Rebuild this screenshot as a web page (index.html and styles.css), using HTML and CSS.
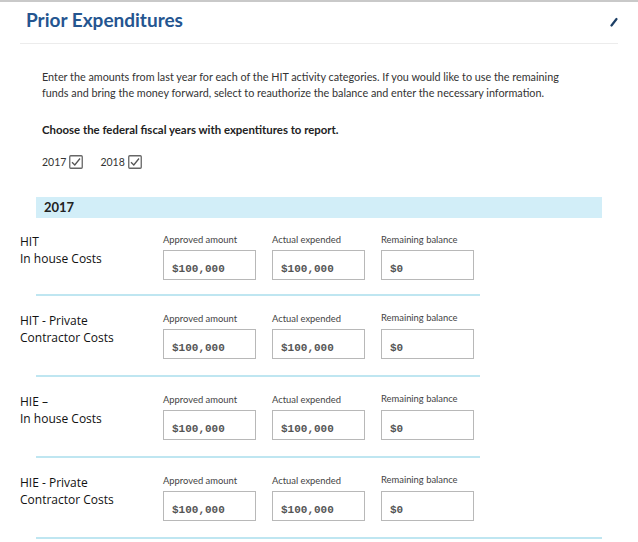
FILE: index.html
```html
<!DOCTYPE html>
<html lang="en">
<head>
<meta charset="utf-8">
<title>Prior Expenditures</title>
<link rel="stylesheet" href="styles.css">
</head>
<body>
<div class="topline"></div>
<header class="head">
  <h1 class="title">Prior Expenditures</h1>
  <svg class="edit-icon" width="8" height="10" viewBox="0 0 8 10"><path d="M1.5 8.5 L6.5 2" stroke="#1d3f66" stroke-width="2.2" stroke-linecap="round" fill="none"/></svg>
</header>
<section class="content">
  <p class="intro">Enter the amounts from last year for each of the HIT activity categories. If you would like to use the remaining funds and bring the money forward, select to reauthorize the balance and enter the necessary information.</p>
  <p class="choose">Choose the federal fiscal years with expentitures to report.</p>
  <div class="years">
    <span class="year">2017 <svg class="cb" width="14" height="14" viewBox="0 0 14 14"><rect x="0.75" y="0.75" width="12.5" height="12.5" rx="1" fill="#fff" stroke="#666" stroke-width="1.3"/><path d="M3 7.2 L5.8 10 L11 3.5" stroke="#555" stroke-width="1.3" fill="none"/></svg></span>
    <span class="year">2018 <svg class="cb" width="14" height="14" viewBox="0 0 14 14"><rect x="0.75" y="0.75" width="12.5" height="12.5" rx="1" fill="#fff" stroke="#666" stroke-width="1.3"/><path d="M3 7.2 L5.8 10 L11 3.5" stroke="#555" stroke-width="1.3" fill="none"/></svg></span>
  </div>
  <div class="band">2017</div>

  <div class="row first">
    <div class="row-label">HIT<br>In house Costs</div>
    <div class="fields">
      <div class="field"><div class="flabel">Approved amount</div><div class="box">$100,000</div></div>
      <div class="field"><div class="flabel">Actual expended</div><div class="box">$100,000</div></div>
      <div class="field"><div class="flabel">Remaining balance</div><div class="box">$0</div></div>
    </div>
  </div>
  <div class="rule"></div>

  <div class="row">
    <div class="row-label">HIT - Private<br>Contractor Costs</div>
    <div class="fields">
      <div class="field"><div class="flabel">Approved amount</div><div class="box">$100,000</div></div>
      <div class="field"><div class="flabel">Actual expended</div><div class="box">$100,000</div></div>
      <div class="field"><div class="flabel up">Remaining balance</div><div class="box">$0</div></div>
    </div>
  </div>
  <div class="rule"></div>

  <div class="row">
    <div class="row-label">HIE –<br>In house Costs</div>
    <div class="fields">
      <div class="field"><div class="flabel">Approved amount</div><div class="box">$100,000</div></div>
      <div class="field"><div class="flabel">Actual expended</div><div class="box">$100,000</div></div>
      <div class="field"><div class="flabel up">Remaining balance</div><div class="box">$0</div></div>
    </div>
  </div>
  <div class="rule"></div>

  <div class="row">
    <div class="row-label">HIE - Private<br>Contractor Costs</div>
    <div class="fields">
      <div class="field"><div class="flabel">Approved amount</div><div class="box">$100,000</div></div>
      <div class="field"><div class="flabel">Actual expended</div><div class="box">$100,000</div></div>
      <div class="field"><div class="flabel up">Remaining balance</div><div class="box">$0</div></div>
    </div>
  </div>
  <div class="rule wide"></div>
</section>
</body>
</html>
```
FILE: styles.css
```css
html, body {
  margin: 0;
  padding: 0;
  background: #fff;
}
body {
  font-family: Lato, "Open Sans", sans-serif;
  color: #333;
  width: 638px;
}
.topline {
  height: 2px;
  background: #c9c9c9;
}
.head {
  margin: 0 20px;
  height: 41px;
  border-bottom: 1px solid #ececec;
  display: flex;
  justify-content: space-between;
  align-items: flex-start;
}
.title {
  margin: 6px 0 0 6px;
  font-family: Lato, sans-serif;
  font-size: 19px;
  font-weight: 700;
  color: #245590;
  line-height: 24px;
}
.edit-icon {
  margin-top: 15px;
}
.intro {
  margin: 25px 0 0 42px;
  width: 530px;
  font-size: 10.8px;
  line-height: 16px;
  color: #333;
}
.choose {
  margin: 21px 0 0 42px;
  font-size: 11.4px;
  font-weight: 700;
  line-height: 16px;
  color: #222;
}
.years {
  margin: 17px 0 0 42px;
  display: flex;
  gap: 17px;
  font-size: 10.5px;
  line-height: 14px;
  color: #333;
}
.year {
  display: inline-flex;
  align-items: center;
  gap: 3px;
}
.cb {
  display: block;
}
.band {
  margin: 28px 36px 0 36px;
  height: 21px;
  background: #d2eef8;
  padding-left: 8px;
  font-size: 13px;
  font-weight: 700;
  line-height: 21px;
  color: #222;
}
.row {
  display: flex;
  padding: 16px 0 0 20px;
  height: 63px;
}
.row.first {
  padding-top: 15px;
  height: 61px;
}
.row-label {
  width: 143px;
  font-family: "Open Sans", sans-serif;
  font-size: 12px;
  line-height: 17px;
  color: #111;
}
.fields {
  display: flex;
}
.field {
  width: 109px;
  display: flex;
  flex-direction: column;
}
.flabel {
  font-size: 9.4px;
  line-height: 12px;
  height: 12px;
  color: #444;
  margin-bottom: 4px;
  padding-top: 1px;
}
.flabel.up {
  padding-top: 0;
  margin-bottom: 5px;
}
.box {
  box-sizing: border-box;
  height: 30px;
  width: 93px;
  border: 1.5px solid #b8b8b8;
  padding: 11px 0 0 8px;
  font-family: "Liberation Mono", monospace;
  font-size: 11px;
  font-weight: 700;
  line-height: 14px;
  color: #555;
}
.rule {
  margin: 0 158px 0 36px;
  height: 2px;
  background: #bfe6f1;
}
.rule.wide {
  margin-right: 36px;
}
```
